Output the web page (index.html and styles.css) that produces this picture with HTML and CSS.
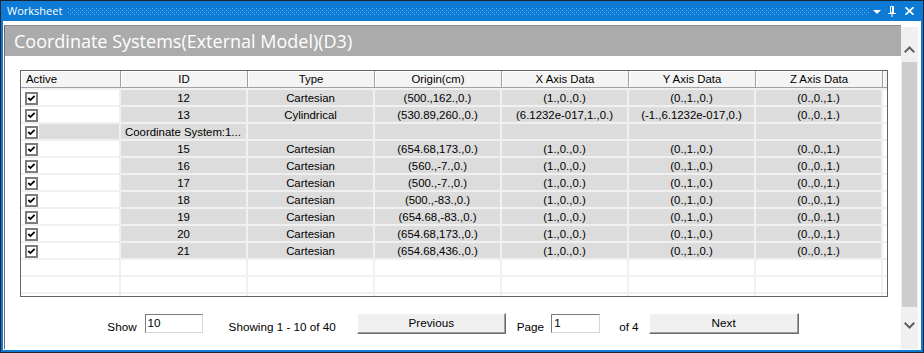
FILE: index.html
```html
<!DOCTYPE html>
<html lang="en">
<head>
<meta charset="utf-8">
<title>Worksheet</title>
<link rel="stylesheet" href="styles.css">
</head>
<body>
<div class="window">
  <div class="titlebar">
    <span class="title">Worksheet</span>
    <span class="dots"></span>
    <svg class="ic-drop" width="8" height="4" viewBox="0 0 8 4"><polygon points="0,0 8,0 4,4" fill="#fff"/></svg>
    <svg class="ic-pin" width="8" height="11" viewBox="0 0 8 11"><path d="M2.5 0.5h3v6.5h-3z" fill="none" stroke="#fff" stroke-width="1"/><path d="M4.5 1v6" stroke="#fff" stroke-width="1"/><path d="M0 7.5h8" stroke="#fff" stroke-width="1"/><path d="M4 8v3" stroke="#fff" stroke-width="1"/></svg>
    <svg class="ic-close" width="9" height="8" viewBox="0 0 9 8"><path d="M0.5 0.3L8.5 7.7M8.5 0.3L0.5 7.7" stroke="#fff" stroke-width="1.7"/></svg>
  </div>
  <div class="client">
    <div class="panel">
      <div class="main">
        <div class="heading">Coordinate Systems(External Model)(D3)</div>
        <div class="grid">
          <div class="row head">
            <div class="c a">Active</div><div class="c">ID</div><div class="c">Type</div><div class="c">Origin(cm)</div><div class="c">X Axis Data</div><div class="c">Y Axis Data</div><div class="c">Z Axis Data</div><div class="c f"></div>
          </div>
          <div class="row d">
            <div class="c a"><span class="cb"><svg width="9" height="9" viewBox="0 0 9 9"><polyline points="1.3,4 3.4,6.1 7.6,1.9" fill="none" stroke="#000" stroke-width="1.8"/></svg></span></div>
            <div class="c">12</div><div class="c">Cartesian</div><div class="c">(500.,162.,0.)</div><div class="c">(1.,0.,0.)</div><div class="c">(0.,1.,0.)</div><div class="c">(0.,0.,1.)</div><div class="c f"></div>
          </div>
          <div class="row d">
            <div class="c a"><span class="cb"><svg width="9" height="9" viewBox="0 0 9 9"><polyline points="1.3,4 3.4,6.1 7.6,1.9" fill="none" stroke="#000" stroke-width="1.8"/></svg></span></div>
            <div class="c">13</div><div class="c">Cylindrical</div><div class="c">(530.89,260.,0.)</div><div class="c">(6.1232e-017,1.,0.)</div><div class="c">(-1.,6.1232e-017,0.)</div><div class="c">(0.,0.,1.)</div><div class="c f"></div>
          </div>
          <div class="row d">
            <div class="c a grayed"><span class="cb"><svg width="9" height="9" viewBox="0 0 9 9"><polyline points="1.3,4 3.4,6.1 7.6,1.9" fill="none" stroke="#000" stroke-width="1.8"/></svg></span></div>
            <div class="c left">Coordinate System:1...</div><div class="c"></div><div class="c"></div><div class="c"></div><div class="c"></div><div class="c"></div><div class="c f"></div>
          </div>
          <div class="row d">
            <div class="c a"><span class="cb"><svg width="9" height="9" viewBox="0 0 9 9"><polyline points="1.3,4 3.4,6.1 7.6,1.9" fill="none" stroke="#000" stroke-width="1.8"/></svg></span></div>
            <div class="c">15</div><div class="c">Cartesian</div><div class="c">(654.68,173.,0.)</div><div class="c">(1.,0.,0.)</div><div class="c">(0.,1.,0.)</div><div class="c">(0.,0.,1.)</div><div class="c f"></div>
          </div>
          <div class="row d">
            <div class="c a"><span class="cb"><svg width="9" height="9" viewBox="0 0 9 9"><polyline points="1.3,4 3.4,6.1 7.6,1.9" fill="none" stroke="#000" stroke-width="1.8"/></svg></span></div>
            <div class="c">16</div><div class="c">Cartesian</div><div class="c">(560.,-7.,0.)</div><div class="c">(1.,0.,0.)</div><div class="c">(0.,1.,0.)</div><div class="c">(0.,0.,1.)</div><div class="c f"></div>
          </div>
          <div class="row d">
            <div class="c a"><span class="cb"><svg width="9" height="9" viewBox="0 0 9 9"><polyline points="1.3,4 3.4,6.1 7.6,1.9" fill="none" stroke="#000" stroke-width="1.8"/></svg></span></div>
            <div class="c">17</div><div class="c">Cartesian</div><div class="c">(500.,-7.,0.)</div><div class="c">(1.,0.,0.)</div><div class="c">(0.,1.,0.)</div><div class="c">(0.,0.,1.)</div><div class="c f"></div>
          </div>
          <div class="row d">
            <div class="c a"><span class="cb"><svg width="9" height="9" viewBox="0 0 9 9"><polyline points="1.3,4 3.4,6.1 7.6,1.9" fill="none" stroke="#000" stroke-width="1.8"/></svg></span></div>
            <div class="c">18</div><div class="c">Cartesian</div><div class="c">(500.,-83.,0.)</div><div class="c">(1.,0.,0.)</div><div class="c">(0.,1.,0.)</div><div class="c">(0.,0.,1.)</div><div class="c f"></div>
          </div>
          <div class="row d">
            <div class="c a"><span class="cb"><svg width="9" height="9" viewBox="0 0 9 9"><polyline points="1.3,4 3.4,6.1 7.6,1.9" fill="none" stroke="#000" stroke-width="1.8"/></svg></span></div>
            <div class="c">19</div><div class="c">Cartesian</div><div class="c">(654.68,-83.,0.)</div><div class="c">(1.,0.,0.)</div><div class="c">(0.,1.,0.)</div><div class="c">(0.,0.,1.)</div><div class="c f"></div>
          </div>
          <div class="row d">
            <div class="c a"><span class="cb"><svg width="9" height="9" viewBox="0 0 9 9"><polyline points="1.3,4 3.4,6.1 7.6,1.9" fill="none" stroke="#000" stroke-width="1.8"/></svg></span></div>
            <div class="c">20</div><div class="c">Cartesian</div><div class="c">(654.68,173.,0.)</div><div class="c">(1.,0.,0.)</div><div class="c">(0.,1.,0.)</div><div class="c">(0.,0.,1.)</div><div class="c f"></div>
          </div>
          <div class="row d">
            <div class="c a"><span class="cb"><svg width="9" height="9" viewBox="0 0 9 9"><polyline points="1.3,4 3.4,6.1 7.6,1.9" fill="none" stroke="#000" stroke-width="1.8"/></svg></span></div>
            <div class="c">21</div><div class="c">Cartesian</div><div class="c">(654.68,436.,0.)</div><div class="c">(1.,0.,0.)</div><div class="c">(0.,1.,0.)</div><div class="c">(0.,0.,1.)</div><div class="c f"></div>
          </div>
          <div class="row e"><div class="c"></div><div class="c"></div><div class="c"></div><div class="c"></div><div class="c"></div><div class="c"></div><div class="c"></div><div class="c f"></div></div>
          <div class="row e"><div class="c"></div><div class="c"></div><div class="c"></div><div class="c"></div><div class="c"></div><div class="c"></div><div class="c"></div><div class="c f"></div></div>
          <div class="row e"><div class="c"></div><div class="c"></div><div class="c"></div><div class="c"></div><div class="c"></div><div class="c"></div><div class="c"></div><div class="c f"></div></div>
        </div>
        <div class="pager">
          <span class="lbl">Show</span>
          <input class="box show" type="text" value="10">
          <span class="lbl showing">Showing 1 - 10 of 40</span>
          <button class="btn prev" type="button">Previous</button>
          <span class="lbl page">Page</span>
          <input class="box pg" type="text" value="1">
          <span class="lbl of">of 4</span>
          <button class="btn next" type="button">Next</button>
        </div>
      </div>
      <div class="vscroll">
        <div class="sb-up"><svg width="11" height="7" viewBox="0 0 11 7"><polyline points="0.7,6.3 5.5,1.5 10.3,6.3" fill="none" stroke="#606060" stroke-width="2"/></svg></div>
        <div class="sb-thumb"></div>
        <div class="sb-down"><svg width="11" height="7" viewBox="0 0 11 7"><polyline points="0.7,0.7 5.5,5.5 10.3,0.7" fill="none" stroke="#606060" stroke-width="2"/></svg></div>
      </div>
    </div>
  </div>
</div>
</body>
</html>
```
FILE: styles.css
```css
* { box-sizing: border-box; }
html, body { margin: 0; padding: 0; }
body {
  width: 924px;
  height: 353px;
  overflow: hidden;
  background: #fff;
  font-family: "Liberation Sans", Arial, sans-serif;
  color: #000;
}
.window {
  width: 924px;
  height: 353px;
  border: 1px solid #1a2633;
  background: #0d7bd6;
  padding: 0 2px 2px 2px;
  display: flex;
  flex-direction: column;
}
.titlebar {
  height: 20px;
  flex: none;
  display: flex;
  align-items: center;
  color: #fff;
  font-family: "Open Sans", "Liberation Sans", sans-serif;
  font-size: 11px;
  padding: 0 7px 0 4px;
}
.titlebar .title { line-height: 20px; }
.titlebar .dots {
  flex: 1;
  align-self: flex-start;
  margin: 7px 3px 0 6px;
  height: 8px;
  background-image:
    radial-gradient(circle at 0.5px 0.5px, #6fb3ec 0.7px, transparent 0.9px),
    radial-gradient(circle at 2.5px 2.5px, #6fb3ec 0.7px, transparent 0.9px);
  background-size: 4px 4px;
}
.ic-drop { flex: none; margin-top: 1px; }
.ic-pin { flex: none; margin-left: 7px; }
.ic-close { flex: none; margin-left: 9px; }

.client {
  flex: 1;
  background: #fff;
  padding: 4px 3px 1px 1px;
  display: flex;
}
.panel {
  flex: 1;
  display: flex;
  border-left: 1px solid #6d6d6d;
}
.main {
  width: 896px;
  flex: none;
  display: flex;
  flex-direction: column;
  border-top: 1px solid #8c8c8c;
}
.heading {
  height: 30px;
  flex: none;
  background: #ababab;
  color: #fff;
  font-family: "Open Sans", "Liberation Sans", sans-serif;
  font-size: 18px;
  line-height: 30px;
  padding-left: 9px;
  white-space: nowrap;
}

.grid {
  margin: 14px 0 0 15px;
  width: 868px;
  height: 227px;
  flex: none;
  border: 1px solid #646464;
  overflow: hidden;
  font-size: 11.4px;
}
.row {
  display: grid;
  grid-template-columns: 100px repeat(6, 127px) 1fr;
  height: 17px;
}
.c {
  white-space: nowrap;
  overflow: hidden;
  text-align: center;
}
.head { height: 17px; }
.head .c {
  background: #f4f4f4;
  border-right: 1px solid #a0a0a0;
  border-bottom: 1px solid #a0a0a0;
  box-shadow: inset 1px 1px 0 #fff;
  line-height: 16px;
}
.head .c.a { text-align: left; padding-left: 5px; }
.head .c.f { border-right: none; }

.d .c {
  background: #dcdcdc;
  border-top: 2px solid #f0f0f0;
  border-right: 2px solid #f0f0f0;
  padding-top: 2px;
  line-height: 13px;
}
.d .c.a {
  background: #fff;
  padding: 0 0 0 4px;
  display: flex;
  align-items: center;
}
.d .c.a.grayed {
  background: linear-gradient(to right, #fff 18px, #dcdcdc 18px);
}
.d .c.left { text-align: left; padding-left: 4px; }
.d .c.f { background: #fff; border-right: none; }

.e .c {
  background: #fff;
  border-top: 2px solid #f0f0f0;
  border-right: 2px solid #f0f0f0;
}
.e .c.f { border-right: none; }

.cb {
  width: 13px;
  height: 13px;
  margin-top: 2px;
  border: 2px solid #7d7d7d;
  background: #fff;
  display: flex;
  align-items: center;
  justify-content: center;
}
.cb svg { display: block; }

.pager {
  margin-top: 16px;
  height: 21px;
  display: flex;
  align-items: center;
  justify-content: center;
  font-size: 11.7px;
}
.lbl { margin-top: 6px; line-height: 14px; white-space: nowrap; }
.box {
  width: 58px;
  height: 19px;
  margin: 0 0 0 8px;
  padding: 0 2px 3px;
  border: 1px solid;
  border-color: #7a7a7a #d6d6d6 #d6d6d6 #7a7a7a;
  background: #fff;
  font-family: "Liberation Sans", Arial, sans-serif;
  font-size: 11.7px;
  color: #000;
  outline: none;
}
.box.pg { width: 49px; margin-left: 7px; }
.showing { margin-left: 26px; }
.btn {
  height: 21px;
  margin: 0;
  padding: 0 0 2px;
  background: #f0f0f0;
  border: 1px solid;
  border-color: #fff #6b6b6b #6b6b6b #fff;
  box-shadow: inset -1px -1px 0 #a0a0a0;
  font-family: "Liberation Sans", Arial, sans-serif;
  font-size: 11.7px;
  color: #000;
}
.btn.prev { width: 149px; margin-left: 21px; }
.page { margin-left: 11px; }
.of { margin-left: 19px; }
.btn.next { width: 150px; margin-left: 10px; }

.vscroll {
  width: 17px;
  flex: none;
  margin-top: 2px;
  background: #f0f0f0;
  display: flex;
  flex-direction: column;
}
.sb-up {
  height: 35px;
  flex: none;
  display: flex;
  justify-content: center;
  padding-top: 19px;
}
.sb-thumb {
  height: 245px;
  flex: none;
  margin: 0 1px;
  background: #cdcdcd;
}
.sb-down {
  flex: 1;
  display: flex;
  justify-content: center;
  padding-top: 15px;
}
.sb-up svg, .sb-down svg { display: block; }
```
